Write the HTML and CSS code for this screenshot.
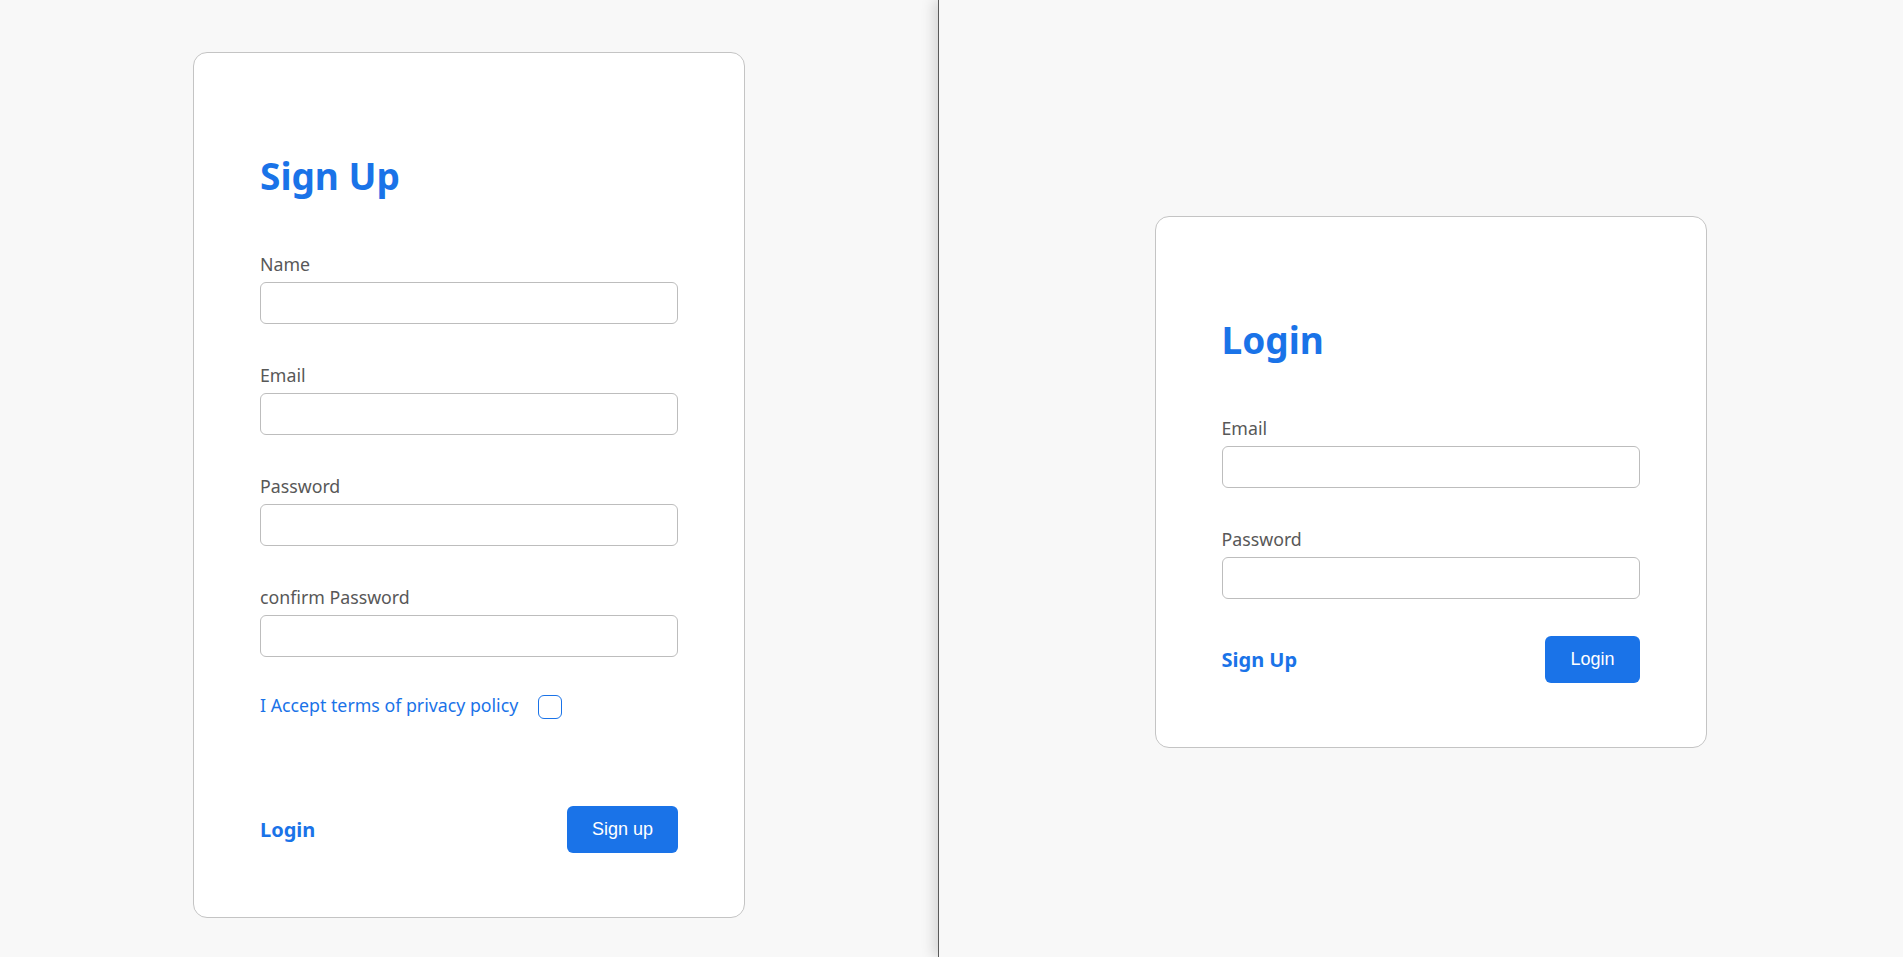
FILE: index.html
```html
<!DOCTYPE html>
<html lang="en">
<head>
<meta charset="utf-8">
<title>Sign Up / Login</title>
<link rel="stylesheet" href="styles.css">
</head>
<body>
<main class="page">
  <section class="panel panel-left">
    <form class="card">
      <h1 class="card-title">Sign Up</h1>
      <div class="field">
        <label class="field-label" for="su-name">Name</label>
        <input class="field-input" id="su-name" type="text">
      </div>
      <div class="field">
        <label class="field-label" for="su-email">Email</label>
        <input class="field-input" id="su-email" type="email">
      </div>
      <div class="field">
        <label class="field-label" for="su-pass">Password</label>
        <input class="field-input" id="su-pass" type="password">
      </div>
      <div class="field">
        <label class="field-label" for="su-pass2">confirm Password</label>
        <input class="field-input" id="su-pass2" type="password">
      </div>
      <div class="terms">
        <label class="terms-text" for="su-terms">I Accept terms of privacy policy</label>
        <input class="terms-check" id="su-terms" type="checkbox">
      </div>
      <div class="actions actions-signup">
        <a class="switch-link" href="#">Login</a>
        <button class="btn" type="button">Sign up</button>
      </div>
    </form>
  </section>
  <section class="panel panel-right">
    <form class="card">
      <h1 class="card-title">Login</h1>
      <div class="field">
        <label class="field-label" for="li-email">Email</label>
        <input class="field-input" id="li-email" type="email">
      </div>
      <div class="field field-last">
        <label class="field-label" for="li-pass">Password</label>
        <input class="field-input" id="li-pass" type="password">
      </div>
      <div class="actions">
        <a class="switch-link" href="#">Sign Up</a>
        <button class="btn" type="button">Login</button>
      </div>
    </form>
  </section>
</main>
</body>
</html>
```
FILE: styles.css
```css
* { box-sizing: border-box; }

html, body {
  margin: 0;
  padding: 0;
  height: 100%;
}

body {
  background: #f8f8f8;
  font-family: "Noto Sans", "Open Sans", sans-serif;
  overflow: hidden;
}

.page {
  display: flex;
  height: 957px;
}

.panel {
  display: flex;
  align-items: center;
  justify-content: center;
  height: 100%;
}

.panel-left {
  flex: 0 0 938px;
  padding-top: 13px;
}

.panel-right {
  flex: 1 1 auto;
  border-left: 1px solid #5a5a5a;
  box-shadow: -5px 0 12px rgba(0, 0, 0, 0.13);
  padding-top: 7px;
  padding-left: 19px;
  background: #f8f8f8;
}

.card {
  width: 552px;
  background: #fff;
  border: 1px solid #c4c4c4;
  border-radius: 14px;
  padding: 98px 66px 64px;
  display: flex;
  flex-direction: column;
}

.card-title {
  margin: 0 0 51px;
  font-size: 37px;
  line-height: 50px;
  font-weight: 700;
  color: #1a73e8;
}

.field {
  display: flex;
  flex-direction: column;
  gap: 6px;
  margin-bottom: 39px;
}

.field-last {
  margin-bottom: 37px;
}

.field-label {
  font-size: 17.75px;
  line-height: 24px;
  color: #585858;
}

.field-input {
  width: 100%;
  height: 42px;
  border: 1px solid #bdbdbd;
  border-radius: 6px;
  background: #fff;
  padding: 0 10px;
  font: inherit;
  font-size: 16px;
  outline: none;
}

.terms {
  display: flex;
  align-items: flex-start;
  gap: 20px;
  margin-top: -3px;
}

.terms-text {
  font-size: 17.75px;
  line-height: 24px;
  color: #1a73e8;
}

.terms-check {
  appearance: none;
  -webkit-appearance: none;
  margin: 2px 0 0;
  width: 24px;
  height: 24px;
  border: 1.5px solid #1a73e8;
  border-radius: 6px;
  background: #fff;
}

.actions {
  display: flex;
  align-items: center;
  justify-content: space-between;
}

.actions-signup {
  margin-top: 87px;
}

.switch-link {
  font-size: 20px;
  line-height: 26px;
  font-weight: 700;
  color: #1a73e8;
  text-decoration: none;
}

.btn {
  border: none;
  border-radius: 6px;
  background: #1a73e8;
  color: #fff;
  font-family: "Liberation Sans", Arial, sans-serif;
  font-size: 18px;
  line-height: 21px;
  padding: 13px 25px;
  cursor: pointer;
}
```
